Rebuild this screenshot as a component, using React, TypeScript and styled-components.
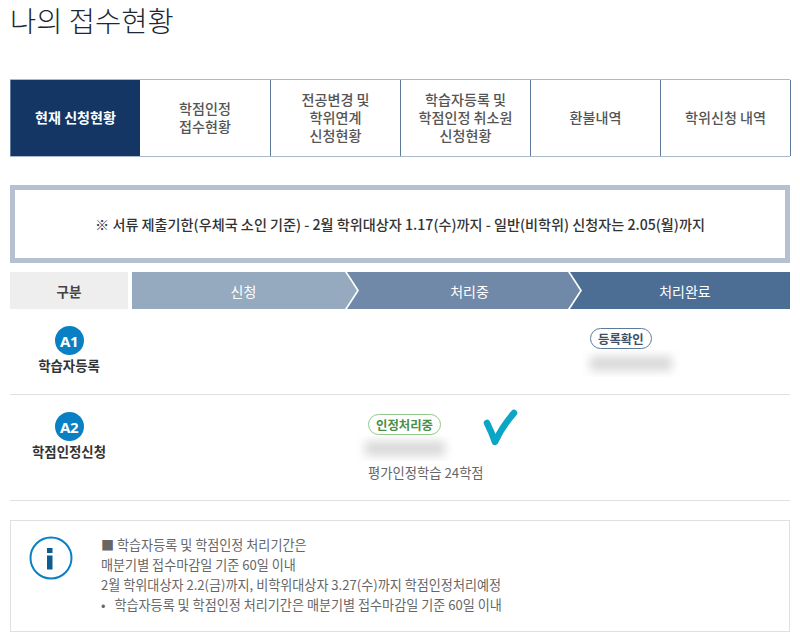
import styled, { createGlobalStyle } from 'styled-components';

const GlobalStyle = createGlobalStyle`
    html, body {
        margin: 0;
        padding: 0;
        background: #fff;
    }
    body {
        font-family: "Noto Sans CJK KR", "Noto Sans", sans-serif;
        color: #555;
    }
`;

const Page = styled.div`
    width: 800px;
    height: 637px;
    padding: 0 10px;
    box-sizing: border-box;
    overflow: hidden;
`;

const Title = styled.h1`
    margin: 0;
    height: 79px;
    font-size: 28.5px;
    line-height: 40px;
    font-weight: 300;
    color: #1d2735;
`;

const Tabs = styled.ul`
    display: grid;
    grid-template-columns: repeat(5, 130px) 131px;
    height: 78px;
    margin: 0;
    padding: 0;
    list-style: none;
    box-sizing: border-box;
    border-top: 1px solid #a9b8cb;
    border-bottom: 1px solid #a9b8cb;
`;

const Tab = styled.li<{ $active?: boolean }>`
    display: flex;
    align-items: center;
    justify-content: center;
    padding-bottom: 3px;
    box-sizing: border-box;
    text-align: center;
    font-size: 14.1px;
    line-height: 18px;
    font-weight: ${(p) => (p.$active ? 700 : 500)};
    color: ${(p) => (p.$active ? '#fff' : '#555')};
    background: ${(p) => (p.$active ? '#133664' : '#fff')};
    border-left: 1px solid #5d7a9c;
    &:nth-child(2) {
        border-left: none;
    }
    &:last-child {
        border-right: 1px solid #5d7a9c;
    }
`;

const Notice = styled.div`
    display: flex;
    align-items: center;
    justify-content: center;
    height: 78px;
    margin-top: 28px;
    box-sizing: border-box;
    border: 5px solid #b5c0d1;
    font-size: 14.15px;
    font-weight: 500;
    color: #333;
`;

const Header = styled.div`
    display: flex;
    height: 37px;
    margin-top: 9px;
`;

const HeaderLabel = styled.div`
    display: flex;
    align-items: center;
    justify-content: center;
    width: 118px;
    margin-right: 4px;
    background: #eeeeee;
    font-size: 13.5px;
    font-weight: 700;
    color: #444;
`;

const Step = styled.div<{ $width: number; $color: string; $pad: number; $order: number }>`
    position: relative;
    display: flex;
    align-items: center;
    justify-content: center;
    width: ${(p) => p.$width}px;
    padding-left: ${(p) => p.$pad}px;
    box-sizing: border-box;
    background: ${(p) => p.$color};
    font-size: 14px;
    color: #fff;
    z-index: ${(p) => p.$order};

    &:not(:last-child)::after {
        content: '';
        position: absolute;
        top: 0;
        left: 100%;
        width: 14px;
        height: 100%;
        background: #fff;
        clip-path: polygon(0 0, 2px 0, 100% 50%, 2px 100%, 0 100%);
    }
    &:not(:last-child)::before {
        content: '';
        position: absolute;
        top: 0;
        left: 100%;
        width: 12px;
        height: 100%;
        background: ${(p) => p.$color};
        clip-path: polygon(0 0, 100% 50%, 0 100%);
        z-index: 1;
    }
`;

const Row = styled.div<{ $height: number }>`
    display: flex;
    height: ${(p) => p.$height}px;
    box-sizing: border-box;
    border-bottom: 1px solid #e0e0e0;
`;

const RowLabel = styled.div`
    display: flex;
    flex-direction: column;
    align-items: center;
    width: 118px;
    margin-right: 4px;
    padding-top: 17px;
    font-size: 13.4px;
    line-height: 20px;
    font-weight: 700;
    color: #333;
`;

const Circle = styled.span`
    display: flex;
    align-items: center;
    justify-content: center;
    width: 29px;
    height: 29px;
    border-radius: 50%;
    background: #0a80c4;
    color: #fff;
    font-family: "Noto Sans", sans-serif;
    font-size: 15px;
    font-weight: 700;
    letter-spacing: -0.5px;
`;

const Cell = styled.div<{ $offset: number }>`
    position: relative;
    margin-left: ${(p) => p.$offset}px;
    padding-top: 19px;
    font-size: 13.3px;
    line-height: 20px;
    color: #666;
`;

const Badge = styled.span<{ $green?: boolean }>`
    display: inline-flex;
    align-items: center;
    justify-content: center;
    height: 21px;
    padding: 0 7px;
    box-sizing: border-box;
    border-radius: 11px;
    border: 1px solid ${(p) => (p.$green ? '#8fc98a' : '#5d7a9c')};
    font-size: 12.4px;
    font-weight: 700;
    color: ${(p) => (p.$green ? '#4a8f46' : '#3f5066')};
`;

const SmudgeClip = styled.div<{ $width: number; $height: number; $left: number }>`
    width: ${(p) => p.$width}px;
    height: ${(p) => p.$height}px;
    margin: 1px 0 2px ${(p) => p.$left}px;
    overflow: hidden;
    display: flex;
    align-items: center;
    justify-content: center;
`;

const Smudge = styled.div`
    width: 84%;
    height: 15px;
    background: #dadada;
    filter: blur(5px);
`;

const Check = styled.svg`
    position: absolute;
    left: 114px;
    top: 14px;
    width: 36px;
    height: 40px;
`;

const InfoBox = styled.div`
    display: flex;
    height: 112px;
    margin-top: 19px;
    box-sizing: border-box;
    padding: 14px 0 0 18px;
    border: 1px solid #e0e0e0;
    font-size: 13.1px;
    line-height: 20px;
    color: #666;
`;

const InfoIcon = styled.svg`
    width: 44px;
    height: 44px;
    margin: 1px 28px 0 0;
    flex: none;
`;

const InfoLines = styled.div`
    display: flex;
    flex-direction: column;
`;

const BulletLine = styled.div`
    display: flex;
    gap: 9px;
`;

const App = () => {
    return (
        <Page>
            <GlobalStyle />
            <Title>나의 접수현황</Title>
            <Tabs>
                <Tab $active>현재 신청현황</Tab>
                <Tab>학점인정<br />접수현황</Tab>
                <Tab>전공변경 및<br />학위연계<br />신청현황</Tab>
                <Tab>학습자등록 및<br />학점인정 취소원<br />신청현황</Tab>
                <Tab>환불내역</Tab>
                <Tab>학위신청 내역</Tab>
            </Tabs>
            <Notice>※ 서류 제출기한(우체국 소인 기준) - 2월 학위대상자 1.17(수)까지 - 일반(비학위) 신청자는 2.05(월)까지</Notice>
            <Header>
                <HeaderLabel>구분</HeaderLabel>
                <Step $width={213} $color="#95a9bf" $pad={10} $order={3}>신청</Step>
                <Step $width={223} $color="#7089a8" $pad={26} $order={2}>처리중</Step>
                <Step $width={222} $color="#4d6e94" $pad={12} $order={1}>처리완료</Step>
            </Header>
            <Row $height={86}>
                <RowLabel>
                    <Circle>A1</Circle>
                    학습자등록
                </RowLabel>
                <Cell $offset={458}>
                    <Badge>등록확인</Badge>
                    <SmudgeClip $width={98} $height={27} $left={-8}>
                        <Smudge />
                    </SmudgeClip>
                </Cell>
            </Row>
            <Row $height={106}>
                <RowLabel>
                    <Circle>A2</Circle>
                    학점인정신청
                </RowLabel>
                <Cell $offset={236}>
                    <Badge $green>인정처리중</Badge>
                    <SmudgeClip $width={96} $height={25} $left={-11}>
                        <Smudge />
                    </SmudgeClip>
                    평가인정학습 24학점
                    <Check viewBox="0 0 36 40">
                        <path d="M5 14 C8 20 11 27 13 33 C18 22 24 13 32 4" fill="none" stroke="#0ba6c6" strokeWidth="6.5" strokeLinecap="round" strokeLinejoin="round" />
                    </Check>
                </Cell>
            </Row>
            <InfoBox>
                <InfoIcon viewBox="0 0 44 44">
                    <circle cx="22" cy="22" r="20.5" fill="none" stroke="#0a80c4" strokeWidth="2" />
                    <rect x="18" y="12" width="5.5" height="5" fill="#0d5c92" />
                    <rect x="18" y="19.5" width="5.5" height="14" fill="#0d5c92" />
                </InfoIcon>
                <InfoLines>
                    <div>■ 학습자등록 및 학점인정 처리기간은</div>
                    <div>매분기별 접수마감일 기준 60일 이내</div>
                    <div>2월 학위대상자 2.2(금)까지, 비학위대상자 3.27(수)까지 학점인정처리예정</div>
                    <BulletLine>
                        <span>•</span>
                        <span>학습자등록 및 학점인정 처리기간은 매분기별 접수마감일 기준 60일 이내</span>
                    </BulletLine>
                </InfoLines>
            </InfoBox>
        </Page>
    );
};

export default App;
